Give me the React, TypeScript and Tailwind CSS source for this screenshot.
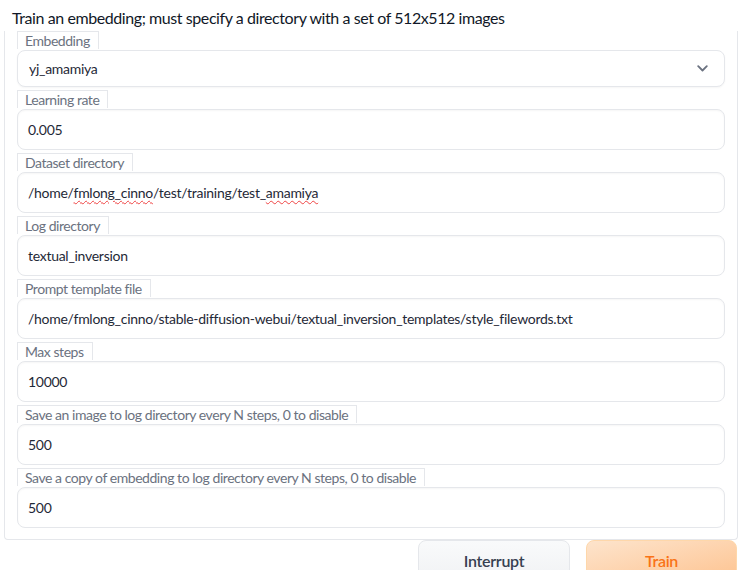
import type { ReactNode } from "react";

const FONT = "font-['Source_Sans_Pro','Lato','Liberation_Sans',sans-serif]";

function Label({ children }: { children: ReactNode }) {
  return (
    <div className="flex">
      <span className="h-[18px] border-t border-l border-r border-[#e5e7eb] pl-[7px] pr-[8px] text-[14px] leading-[17px] tracking-[-0.45px] text-[#6b7280]">
        {children}
      </span>
    </div>
  );
}

function TextField({ label, value }: { label: string; value: ReactNode }) {
  return (
    <div className="mt-[3px]">
      <Label>{label}</Label>
      <div className="mt-px flex h-[41px] items-center rounded-[8px] border border-[#e5e7eb] bg-white pl-[10px] text-[14px] tracking-[-0.28px] text-[#1f2937] shadow-[inset_0_1px_2px_rgba(0,0,0,0.04)]">
        {value}
      </div>
    </div>
  );
}

function Misspelled({ children }: { children: ReactNode }) {
  return (
    <span className="underline decoration-wavy decoration-[#ef4444] decoration-1 underline-offset-2">
      {children}
    </span>
  );
}

export default function App() {
  const fields: { label: string; value: ReactNode }[] = [
    { label: "Learning rate", value: "0.005" },
    {
      label: "Dataset directory",
      value: (
        <span>
          /home/<Misspelled>fmlong_cinno</Misspelled>/test/training/test_<Misspelled>amamiya</Misspelled>
        </span>
      ),
    },
    { label: "Log directory", value: "textual_inversion" },
    {
      label: "Prompt template file",
      value: "/home/fmlong_cinno/stable-diffusion-webui/textual_inversion_templates/style_filewords.txt",
    },
    { label: "Max steps", value: "10000" },
    { label: "Save an image to log directory every N steps, 0 to disable", value: "500" },
    { label: "Save a copy of embedding to log directory every N steps, 0 to disable", value: "500" },
  ];

  return (
    <div className={`h-[570px] w-[740px] overflow-hidden bg-white ${FONT}`}>
      {/* Header */}
      <div className="h-[38px] px-[12px] pt-[7px] text-[16px] leading-[22px] tracking-[-0.42px] text-[#111827]">
        Train an embedding; must specify a directory with a set of 512x512 images
      </div>

      {/* Form panel */}
      <div className="ml-[4px] w-[734px] rounded-b-[4px] border-x border-b border-[#e5e7eb] px-[12px] pb-[11px]">
        <div className="-mt-[7px]">
          <Label>Embedding</Label>
          <div className="mt-px flex h-[37px] items-center justify-between rounded-[8px] border border-[#e5e7eb] bg-white pl-[11px] pr-[16px] text-[14px] tracking-[-0.28px] text-[#1f2937] shadow-[0_1px_2px_rgba(0,0,0,0.04)]">
            <span>yj_amamiya</span>
            <svg width="11" height="7" viewBox="0 0 11 7" fill="none">
              <path d="M1.2 1.2 5.5 5.5l4.3-4.3" stroke="#6b7280" strokeWidth="1.8" strokeLinecap="round" strokeLinejoin="round" />
            </svg>
          </div>
        </div>
        {fields.map((f) => (
          <TextField key={f.label} label={f.label} value={f.value} />
        ))}
      </div>

      {/* Actions */}
      <div className="flex justify-end gap-[16px] pr-[3px]">
        <button className="h-[42px] w-[152px] rounded-t-[8px] border border-[#e5e7eb] bg-gradient-to-b from-[#f9fafb] to-[#f1f2f4] text-[16px] font-semibold tracking-[-0.3px] text-[#374151]">
          Interrupt
        </button>
        <button className="h-[42px] w-[151px] rounded-t-[8px] border border-[#fed7aa] bg-gradient-to-br from-[#fde4cc] to-[#fdc390] text-[16px] font-semibold tracking-[-0.3px] text-[#f97316]">
          Train
        </button>
      </div>
    </div>
  );
}
